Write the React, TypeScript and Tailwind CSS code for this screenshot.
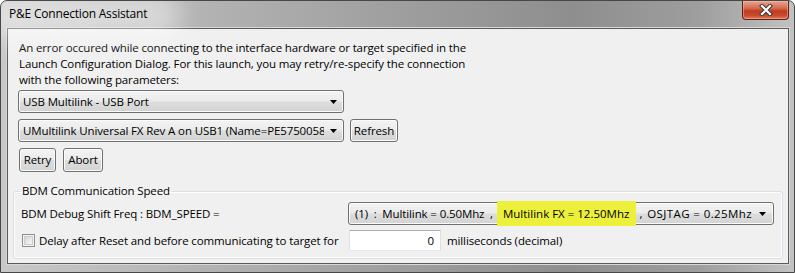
import React from "react";

function Arrow() {
  return (
    <svg width="7" height="4" viewBox="0 0 7 4" className="shrink-0">
      <path d="M0 0H7L3.5 4Z" fill="#000" />
    </svg>
  );
}

const btn =
  "flex items-center justify-center rounded-[3px] border border-[#707070] bg-[linear-gradient(#f3f3f3_0%,#ebebeb_48%,#dddddd_52%,#d3d3d3_100%)] shadow-[inset_0_0_0_1px_#fbfbfb]";

export default function App() {
  return (
    <div className="h-[273px] w-[795px] bg-white">
      <div className="relative flex h-full w-full flex-col overflow-hidden rounded-t-[7px] border border-[#474747] bg-[linear-gradient(to_right,#c8c8c8_0%,#b6b6b6_22%,#a0a0a0_48%,#8e8e8e_72%,#9e9e9e_88%,#c2c2c2_100%)] font-['Open_Sans',sans-serif] text-[11.5px] leading-[16px] tracking-[-0.12px] text-black">
        {/* title bar */}
        <div className="relative flex h-[27px] shrink-0 items-start">
          <div className="pointer-events-none absolute left-[-20px] top-[-10px] h-[48px] w-[200px] rounded-full bg-white/45 blur-[12px]" />
          <span className="relative ml-[8px] mt-[5px] whitespace-nowrap text-[12px] leading-[16px] tracking-[-0.2px] text-black">
            P&amp;E Connection Assistant
          </span>
          <div className="relative ml-auto mr-[5px] flex h-[19px] w-[47px] items-center justify-center rounded-b-[4px] border border-t-0 border-[#5e1f14] bg-[linear-gradient(#e8a493_0%,#d46b52_40%,#c23b1f_55%,#c94a2c_80%,#e07b5e_100%)] shadow-[inset_0_0_0_1px_rgba(255,200,180,0.45)]">
            <svg width="14" height="12" viewBox="0 0 14 12">
              <path d="M3 2L11 10M11 2L3 10" stroke="#3a3a3a" strokeWidth="4.2" strokeLinecap="square" />
              <path d="M3 2L11 10M11 2L3 10" stroke="#ffffff" strokeWidth="2.2" strokeLinecap="square" />
            </svg>
          </div>
        </div>

        {/* client area */}
        <div className="mb-[8px] ml-[6px] mr-[5px] flex flex-1 flex-col border border-[#5a5a5a] bg-[#f0f0f0] shadow-[0_0_0_1px_#d8d8d8]">
          <div className="ml-[11px] mt-[11px] whitespace-nowrap leading-[16px]">
            An error occured while connecting to the interface hardware or target specified in the
            <br />
            Launch Configuration Dialog. For this launch, you may retry/re-specify the connection
            <br />
            with the following parameters:
          </div>

          <div className={`${btn} ml-[10px] mt-[2px] h-[23px] w-[326px] !justify-start pl-[4px] pr-[6px]`}>
            <span className="flex-1 whitespace-nowrap">USB Multilink - USB Port</span>
            <Arrow />
          </div>

          <div className="ml-[10px] mt-[6px] flex items-center gap-[6px]">
            <div className={`${btn} h-[23px] w-[326px] !justify-start pl-[4px] pr-[6px]`}>
              <span className="mr-[6px] flex-1 overflow-hidden whitespace-nowrap">
                UMultilink Universal FX Rev A on USB1 (Name=PE57500588)
              </span>
              <Arrow />
            </div>
            <div className={`${btn} h-[23px] w-[48px] whitespace-nowrap`}>Refresh</div>
          </div>

          <div className="ml-[11px] mt-[6px] flex items-center gap-[7px]">
            <div className={`${btn} h-[24px] w-[37px]`}>Retry</div>
            <div className={`${btn} h-[24px] w-[40px]`}>Abort</div>
          </div>

          <fieldset className="mx-[5px] mb-[4px] mt-[12px] flex-1 rounded-[3px] border border-[#d5dfe5] shadow-[inset_0_0_0_1px_#ffffff]">
            <legend className="ml-[6px] whitespace-nowrap px-[2px] leading-[14px]">BDM Communication Speed</legend>
            <div className="ml-[7px] mt-[4px] flex items-center">
              <span className="w-[327px] shrink-0 whitespace-nowrap">BDM Debug Shift Freq : BDM_SPEED =</span>
              <div className={`${btn} relative h-[23px] w-[426px] !justify-start pl-[6px] pr-[7px]`}>
                <span className="flex flex-1 items-center whitespace-pre">
                  <span>(1)  :  Multilink = 0.50Mhz  ,</span>
                  <span className="relative ml-[4px] pl-[6px] pr-[7px]">
                    <span className="absolute bottom-[-4px] left-0 right-0 top-[-5px] bg-[#edf03a]" />
                    <span className="relative tracking-[0px]">Multilink FX = 12.50Mhz</span>
                  </span>
                  <span className="ml-[3px]">,</span>
                  <span className="ml-[5px] tracking-[0.4px]">OSJTAG = 0.25Mhz</span>
                </span>
                <Arrow />
              </div>
            </div>
            <div className="ml-[8px] mt-[5px] flex items-center">
              <div className="flex h-[13px] w-[13px] shrink-0 items-center justify-center border border-[#8f8f8f] bg-[#f4f4f4]">
                <div className="h-[9px] w-[9px] border border-[#c9ccd1] bg-[linear-gradient(135deg,#d5d7da,#f6f6f6)]" />
              </div>
              <span className="ml-[4px] w-[310px] shrink-0 whitespace-nowrap">Delay after Reset and before communicating to target for</span>
              <div className="flex h-[21px] w-[92px] items-center justify-end border border-[#abadb3] border-b-[#e3e9ef] border-l-[#e2e3ea] border-r-[#dbdfe6] bg-white pr-[6px]">
                0
              </div>
              <span className="ml-[6px] whitespace-nowrap">milliseconds (decimal)</span>
            </div>
          </fieldset>
        </div>
      </div>
    </div>
  );
}
